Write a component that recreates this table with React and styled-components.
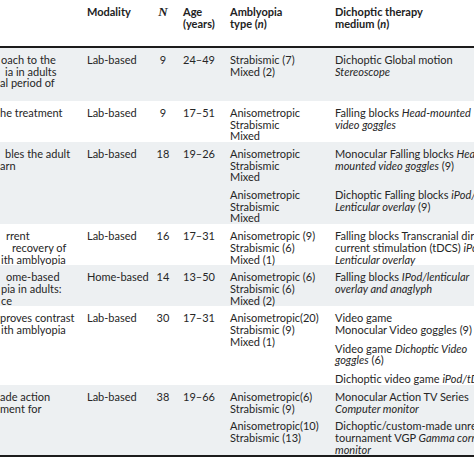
import React from "react";
import styled, { createGlobalStyle } from "styled-components";

const Global = createGlobalStyle`
  html, body { margin: 0; padding: 0; background: #ffffff; overflow: hidden; }
  body { width: 474px; height: 474px; }
`;

const Table = styled.div`
  width: 600px;
  font-family: "Lato", "Open Sans", sans-serif;
  font-size: 11px;
  line-height: 11.7px;
  color: #262626;
  border-bottom: 2px solid #1c1c1c;
`;

const cols = "87px 62px 28px 53px 1fr";

const HeadRow = styled.div`
  display: grid;
  grid-template-columns: ${cols};
  height: 48px;
  box-sizing: border-box;
  padding-top: 6px;
  border-bottom: 2px solid #1c1c1c;
  font-weight: 700;
  color: #222;
`;

const Row = styled.div`
  display: grid;
  grid-template-columns: ${cols};
  background: ${(p) => (p.$shade ? "#edf0f2" : "#ffffff")};
  padding-top: 6px;
  padding-bottom: ${(p) => p.$pb || 0}px;
`;

const Cell = styled.div`
  white-space: nowrap;
  overflow: hidden;
  padding-left: ${(p) => p.$pl || 0}px;
  text-align: ${(p) => (p.$center ? "center" : "left")};
`;

const Line = styled.div`
  white-space: nowrap;
  min-height: 11.7px;
  margin-left: ${(p) => p.$x || 0}px;
`;

const NHead = styled.span`
  font-family: "Liberation Serif", "DejaVu Serif", serif;
  font-style: italic;
  font-weight: 700;
  font-size: 13px;
`;

const Sub = styled.div`
  display: grid;
  grid-template-columns: 105px 1fr;
  row-gap: ${(p) => p.$gap || 6}px;
  align-content: start;
`;

const SubCell = styled.div`
  white-space: nowrap;
  grid-row: ${(p) => (p.$span ? `span ${p.$span}` : "auto")};
  grid-column: ${(p) => p.$col};
`;

const I = styled.i`
  font-style: italic;
`;

const rows = [
  {
    first: [["oach to the", 1], ["ia in adults", 5], ["al period of", 0], ["", 0]],
    mod: "Lab-based",
    n: "9",
    age: "24–49",
    groups: [
      {
        amb: ["Strabismic (7)", "Mixed (2)"],
        dich: [["Dichoptic Global motion"], [<I key="a">Stereoscope</I>]],
      },
    ],
  },
  {
    first: [["he treatment", 0]],
    mod: "Lab-based",
    n: "9",
    age: "17–51",
    groups: [
      {
        amb: ["Anisometropic", "Strabismic", "Mixed"],
        dich: [
          ["Falling blocks ", <I key="a">Head-mounted</I>],
          [<I key="a">video goggles</I>],
        ],
      },
    ],
  },
  {
    first: [["bles the adult", 5], ["arn", 0]],
    mod: "Lab-based",
    n: "18",
    age: "19–26",
    groups: [
      {
        amb: ["Anisometropic", "Strabismic", "Mixed"],
        dich: [
          ["Monocular Falling blocks ", <I key="a">Head-</I>],
          [<I key="a">mounted video goggles</I>, " (9)"],
        ],
      },
      {
        amb: ["Anisometropic", "Strabismic", "Mixed"],
        dich: [
          ["Dichoptic Falling blocks ", <I key="a">iPod/</I>],
          [<I key="a">Lenticular overlay</I>, " (9)"],
        ],
      },
    ],
  },
  {
    first: [["rrent", 6], ["recovery of", 12], ["ith amblyopia", 1]],
    mod: "Lab-based",
    n: "16",
    age: "17–31",
    groups: [
      {
        amb: ["Anisometropic (9)", "Strabismic (6)", "Mixed (1)"],
        dich: [
          ["Falling blocks Transcranial direct"],
          ["current stimulation (tDCS) ", <I key="a">iPod/</I>],
          [<I key="a">Lenticular overlay</I>],
        ],
      },
    ],
  },
  {
    first: [["ome-based", 6], ["pia in adults:", 1], ["ce", 1]],
    mod: "Home-based",
    n: "14",
    age: "13–50",
    groups: [
      {
        amb: ["Anisometropic (6)", "Strabismic (6)", "Mixed (2)"],
        dich: [
          ["Falling blocks ", <I key="a">IPod/lenticular</I>],
          [<I key="a">overlay and anaglyph</I>],
        ],
      },
    ],
  },
  {
    first: [["proves contrast", 0], ["ith amblyopia", 1]],
    mod: "Lab-based",
    n: "30",
    age: "17–31",
    ambSpan: ["Anisometropic(20)", "Strabismic (9)", "Mixed (1)"],
    gap: 7,
    groups: [
      { dich: [["Video game"], ["Monocular Video goggles (9)"]] },
      {
        dich: [
          ["Video game ", <I key="a">Dichoptic Video</I>],
          [<I key="a">goggles</I>, " (6)"],
        ],
      },
      { dich: [["Dichoptic video game ", <I key="a">iPod/tDCS</I>]] },
    ],
  },
  {
    first: [["ade action", 0], ["ment for", 0]],
    mod: "Lab-based",
    n: "38",
    age: "19–66",
    groups: [
      {
        amb: ["Anisometropic(6)", "Strabismic (9)"],
        dich: [["Monocular Action TV Series"], [<I key="a">Computer monitor</I>]],
      },
      {
        amb: ["Anisometropic(10)", "Strabismic (13)"],
        dich: [
          ["Dichoptic/custom-made unreal"],
          ["tournament VGP ", <I key="a">Gamma corrected</I>],
          [<I key="a">monitor</I>],
        ],
      },
    ],
  },
];

function Right({ row }) {
  const items = [];
  if (row.ambSpan) {
    items.push(
      <SubCell key="amb" $col={1} $span={row.groups.length}>
        {row.ambSpan.map((t, i) => (
          <Line key={i}>{t}</Line>
        ))}
      </SubCell>
    );
  }
  row.groups.forEach((g, gi) => {
    if (g.amb) {
      items.push(
        <SubCell key={`a${gi}`} $col={1}>
          {g.amb.map((t, i) => (
            <Line key={i}>{t}</Line>
          ))}
        </SubCell>
      );
    }
    items.push(
      <SubCell key={`d${gi}`} $col={2}>
        {g.dich.map((parts, i) => (
          <Line key={i}>{parts}</Line>
        ))}
      </SubCell>
    );
  });
  return <Sub $gap={row.gap}>{items}</Sub>;
}

export default function App() {
  return (
    <>
      <Global />
      <Table>
        <HeadRow>
          <Cell />
          <Cell>Modality</Cell>
          <Cell $center>
            <NHead>N</NHead>
          </Cell>
          <Cell $pl={6}>
            <Line>Age</Line>
            <Line>(years)</Line>
          </Cell>
          <Sub>
            <SubCell $col={1}>
              <Line>Amblyopia</Line>
              <Line>
                type (<I>n</I>)
              </Line>
            </SubCell>
            <SubCell $col={2}>
              <Line>Dichoptic therapy</Line>
              <Line>
                medium (<I>n</I>)
              </Line>
            </SubCell>
          </Sub>
        </HeadRow>
        {rows.map((r, ri) => (
          <Row key={ri} $shade={ri % 2 === 0}>
            <Cell>
              {r.first.map(([t, x], i) => (
                <Line key={i} $x={x}>
                  {t}
                </Line>
              ))}
            </Cell>
            <Cell>{r.mod}</Cell>
            <Cell $center>{r.n}</Cell>
            <Cell $pl={6}>{r.age}</Cell>
            <Right row={r} />
          </Row>
        ))}
      </Table>
    </>
  );
}
